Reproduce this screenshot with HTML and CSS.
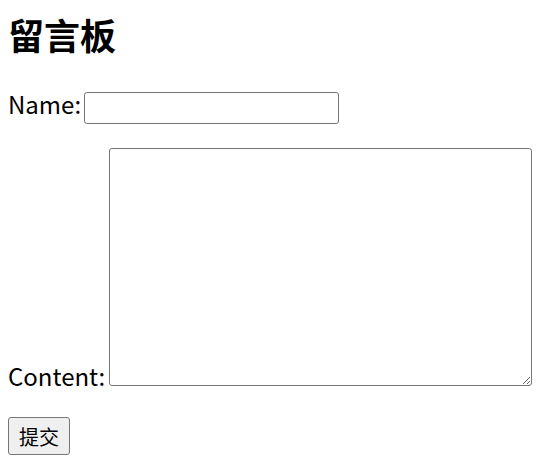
FILE: index.html
```html
<!DOCTYPE html>
<html lang="zh">
<head>
<meta charset="utf-8">
<title>留言板</title>
<link rel="stylesheet" href="styles.css">
</head>
<body>
<h1 class="title">留言板</h1>
<form class="board">
<p class="row">Name: <input class="name" type="text"></p>
<p class="row">Content: <textarea class="content"></textarea></p>
<button class="submit" type="button">提交</button>
</form>
</body>
</html>
```
FILE: styles.css
```css
body {
  margin: 8px;
  font-family: "Noto Sans CJK SC", sans-serif;
  font-size: 24px;
  color: #000;
  background: #fff;
}
.title {
  font-size: 36px;
  font-weight: bold;
  margin: 0 0 26px;
}
.row {
  margin: 0 0 24px;
  word-spacing: -2px;
}
.name {
  width: 255px;
  height: 32px;
  box-sizing: border-box;
  border: 1px solid #767676;
  border-radius: 3px;
  font-size: 20px;
  padding: 1px 2px;
}
.content {
  width: 423px;
  height: 238px;
  box-sizing: border-box;
  border: 1px solid #767676;
  border-radius: 3px;
  font-size: 20px;
  vertical-align: baseline;
}
.submit {
  font-family: "Noto Sans CJK SC", sans-serif;
  font-size: 20px;
  width: 62px;
  height: 38px;
  padding: 0;
  border: 1px solid #767676;
  border-radius: 3px;
  background: #efefef;
  color: #000;
}
```
